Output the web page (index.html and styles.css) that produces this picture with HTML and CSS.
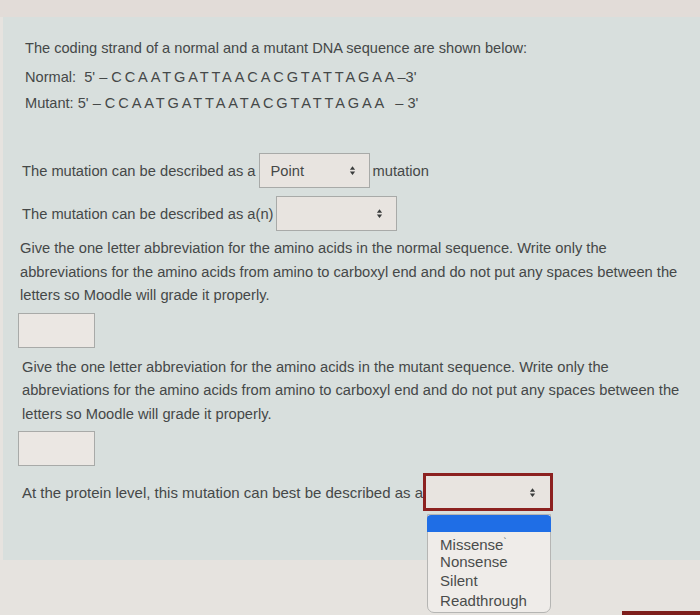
FILE: index.html
```html
<!DOCTYPE html>
<html lang="en">
<head>
  <meta charset="UTF-8">
  <title>Quiz - DNA mutations</title>
  <link rel="stylesheet" href="styles.css">
</head>
<body>
  <div class="topbar"></div>
  <div class="panel">
    <div class="stem">
      <p class="intro">The coding strand of a normal and a mutant DNA sequence are shown below:</p>
      <p class="seq">Normal:&nbsp; 5' – <span class="bases">CCAATGATTAACACGTATTAGAA</span>–3'</p>
      <p class="seq">Mutant: 5' – <span class="bases">CCAATGATTAATACGTATTAGAA</span> &nbsp;– 3'</p>
    </div>

    <div class="row q-type">
      The mutation can be described as a
      <div class="select point"><span>Point</span><svg class="arrows" viewBox="0 0 8 12"><path d="M4 1 L7 5 H1 Z M4 11 L7 7 H1 Z"/></svg></div>
      mutation
    </div>

    <div class="row q-kind">
      The mutation can be described as a(n)
      <div class="select kind"><span></span><svg class="arrows" viewBox="0 0 8 12"><path d="M4 1 L7 5 H1 Z M4 11 L7 7 H1 Z"/></svg></div>
    </div>

    <p class="para">Give the one letter abbreviation for the amino acids in the normal sequence. Write only the<br>abbreviations for the amino acids from amino to carboxyl end and do not put any spaces between the<br>letters so Moodle will grade it properly.</p>
    <input class="answer" type="text">

    <p class="para second">Give the one letter abbreviation for the amino acids in the mutant sequence. Write only the<br>abbreviations for the amino acids from amino to carboxyl end and do not put any spaces between the<br>letters so Moodle will grade it properly.</p>
    <input class="answer" type="text">

    <div class="row q-protein">
      At the protein level, this mutation can best be described as a
      <div class="select focused">
        <span></span><svg class="arrows" viewBox="0 0 8 12"><path d="M4 1 L7 5 H1 Z M4 11 L7 7 H1 Z"/></svg>
        <ul class="menu">
          <li class="picked"></li>
          <li>Missense<sup>`</sup></li>
          <li>Nonsense</li>
          <li>Silent</li>
          <li>Readthrough</li>
        </ul>
      </div>
    </div>
  </div>
  <div class="footer"><div class="tab"></div></div>
</body>
</html>
```

FILE: styles.css
```css
body {
  margin: 0;
  background: #e6e3df;
  font-family: "Liberation Sans", Arial, sans-serif;
  font-size: 15px;
  color: #454848;
  overflow: hidden;
}
.topbar {
  height: 17px;
  background: #e2dcd8;
}
.panel {
  height: 543px;
  margin-left: 3px;
  background: #d8dfdd;
  padding: 18px 0 0 17px;
  box-sizing: border-box;
}
p {
  margin: 0;
}
.stem {
  padding-left: 5px;
  font-size: 14.6px;
}
.intro {
  line-height: 26px;
}
.seq {
  line-height: 26px;
}
.intro + .seq {
  margin-top: 3px;
}
.bases {
  letter-spacing: 2.85px;
}
.row {
  display: flex;
  align-items: center;
  gap: 3px;
  padding-left: 2px;
  font-size: 14.7px;
}
.q-type {
  margin-top: 37px;
}
.q-kind {
  margin-top: 8px;
}
.select {
  position: relative;
  display: flex;
  align-items: center;
  justify-content: space-between;
  height: 35px;
  box-sizing: border-box;
  border: 1px solid #a8aaa8;
  background: #e8e4e0;
  padding: 0 13px 0 11px;
}
.point {
  width: 111px;
}
.kind {
  width: 121px;
}
.arrows {
  width: 7px;
  height: 11px;
  fill: #3a3c3c;
}
.para {
  margin-top: 6px;
  line-height: 23.5px;
  font-size: 14.7px;
  white-space: nowrap;
}
.second {
  margin-top: 8px;
  padding-left: 2px;
}
.answer {
  display: block;
  width: 77px;
  height: 35px;
  box-sizing: border-box;
  margin: 5px 0 0 -2px;
  border: 1px solid #a8aaa8;
  background: #ebe7e3;
}
.q-protein {
  margin-top: 7px;
  gap: 0;
  font-size: 15px;
}
.focused {
  width: 130px;
  height: 38px;
  border: 3px solid #8c2120;
  padding-right: 14px;
}
/* open option list of the focused select */
.menu {
  position: absolute;
  top: 38px;
  left: 1px;
  width: 122px;
  margin: 0;
  padding: 0 0 2px;
  list-style: none;
  background: #efece9;
  border: 1px solid #b5b5b3;
  border-radius: 0 0 7px 7px;
  font-size: 15px;
  color: #4a4c4c;
}
.menu li {
  height: 19.5px;
  line-height: 19.5px;
  padding-left: 12px;
}
.menu .picked {
  height: 17px;
  margin: 0 -1px;
  background: #1f6ee6;
  border-radius: 4px 4px 0 0;
}
.menu sup {
  font-size: 9px;
}
.footer {
  height: 55px;
  position: relative;
}
.tab {
  position: absolute;
  right: 0;
  bottom: 0;
  width: 78px;
  height: 4px;
  background: #7e1e1c;
}
```
